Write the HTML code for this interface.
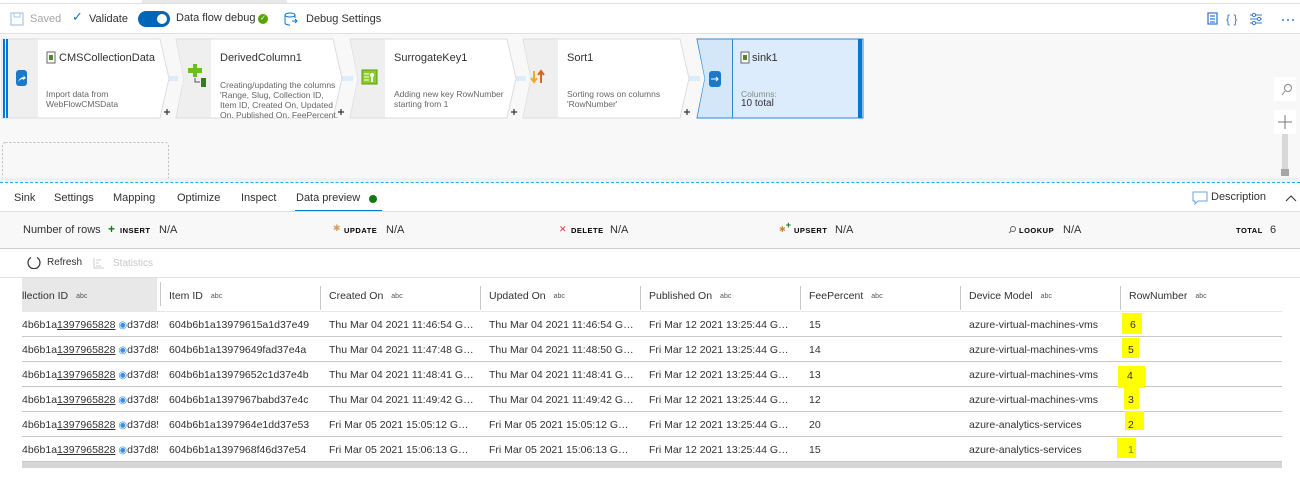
<!DOCTYPE html>
<html><head><meta charset="utf-8"><style>
*{margin:0;padding:0;box-sizing:border-box}
body{width:1300px;height:487px;overflow:hidden;background:#fff;font-family:"Liberation Sans",sans-serif;color:#323130;position:relative}
.a{position:absolute;white-space:nowrap}
.f11{font-size:11px}
.f12{font-size:12px}
.abc{font-size:7px;color:#555;margin-left:8px;vertical-align:1px;font-style:normal}
.cap{font-size:7.5px;font-weight:bold;letter-spacing:.5px;color:#000}
.row{position:absolute;left:22px;width:1260px;height:25px;border-bottom:1px solid #c8c8c8}
.row span,.hd span{position:absolute;top:7px;font-size:10.5px;white-space:nowrap;overflow:hidden;text-overflow:ellipsis;width:145px}
.row span:first-child{width:136px;text-overflow:clip}
.hd span{top:12px;font-size:10.5px}
.vs{position:absolute;top:8px;width:1px;height:24px;background:#c8c8c8}
.yl{position:absolute;background:#ffff00;width:17px;height:20px}
.r b{font-weight:normal;font-size:10px}
</style></head><body>
<div class="a" style="left:142px;top:0;width:145px;height:3px;background:#e8e8e8"></div>
<div class="a" style="left:0;top:3px;width:1300px;height:1px;background:#e0e0e0"></div>
<svg class="a" style="left:10px;top:12px" width="14" height="14"><rect x="1" y="1" width="12" height="12" fill="none" stroke="#a9c6e8" stroke-width="1.2"/><rect x="4" y="1" width="6" height="4" fill="none" stroke="#a9c6e8"/></svg>
<div class="a f11" style="left:30px;top:13px;color:#a6a6a6">Saved</div>
<div class="a" style="left:72px;top:9px;color:#0078d4;font-size:13px">✓</div>
<div class="a f11" style="left:89px;top:13px">Validate</div>
<div class="a" style="left:138px;top:11px;width:32px;height:16px;border-radius:8px;background:#0067b8"></div>
<div class="a" style="left:157px;top:14px;width:10px;height:10px;border-radius:5px;background:#fff"></div>
<div class="a f11" style="left:176px;top:12px">Data flow debug</div>
<div class="a" style="left:258px;top:14px;width:10px;height:10px;border-radius:5px;background:#57a300;color:#fff;font-size:7px;text-align:center;line-height:10px">✓</div>
<svg class="a" style="left:284px;top:11px" width="14" height="16"><ellipse cx="6" cy="4" rx="5" ry="2" fill="none" stroke="#0078d4"/><path d="M1 4v8c0 1 2 2 5 2M11 4v3" fill="none" stroke="#0078d4"/><path d="M8 10h5m-2-2 2 2-2 2" fill="none" stroke="#0078d4"/></svg>
<div class="a f11" style="left:306px;top:13px">Debug Settings</div>
<svg class="a" style="left:1205px;top:11px" width="90" height="16"><path d="M3 2h9v11H3zM5 5h5M5 8h5M5 11h5" fill="none" stroke="#3a7bd5" stroke-width="1.3"/><text x="21" y="12" font-size="12" fill="#3a7bd5" font-family="Liberation Sans">{ }</text><path d="M45 4h12M45 8h12M45 12h12" stroke="#3a7bd5"/><circle cx="49" cy="4" r="1.6" fill="#fff" stroke="#3a7bd5"/><circle cx="54" cy="8" r="1.6" fill="#fff" stroke="#3a7bd5"/><circle cx="49" cy="12" r="1.6" fill="#fff" stroke="#3a7bd5"/><circle cx="78" cy="9" r="1" fill="#3a7bd5"/><circle cx="83" cy="9" r="1" fill="#3a7bd5"/><circle cx="88" cy="9" r="1" fill="#3a7bd5"/></svg>
<div class="a" style="left:0;top:33px;width:1300px;height:1px;background:#e0e0e0"></div>
<div class="a" style="left:0;top:34px;width:1300px;height:144px;background:#f8f8f8"></div>
<svg class="a" style="left:0;top:34px" width="1300" height="146">
<g transform="translate(0,-34)">
<g fill="#dcecfa"><rect x="168" y="76" width="10" height="5"/><rect x="341" y="76" width="12" height="5"/><rect x="515" y="76" width="11" height="5"/><rect x="688" y="76" width="12" height="5"/></g>
<path d="M2 39H160L169 78.5 160 118H2Z" fill="#fff" stroke="#ddd"/>
<rect x="8" y="39.5" width="30" height="78" fill="#efefef"/>
<rect x="3" y="39" width="2" height="79" fill="#0078d4"/><rect x="6" y="39" width="2" height="79" fill="#0078d4"/>
<path d="M176 39H333L342 78.5 333 118H176L184 78.5Z" fill="#fff" stroke="#ddd"/>
<path d="M176.5 39.5H211V117.5H176.5L184 78.5Z" fill="#efefef"/>
<path d="M350 39H507L516 78.5 507 118H350L358 78.5Z" fill="#fff" stroke="#ddd"/>
<path d="M350.5 39.5H385V117.5H350.5L358 78.5Z" fill="#efefef"/>
<path d="M523 39H680L689 78.5 680 118H523L531 78.5Z" fill="#fff" stroke="#ddd"/>
<path d="M523.5 39.5H558V117.5H523.5L531 78.5Z" fill="#efefef"/>
<path d="M697 39H863V118H697L705 78.5Z" fill="#dcecfc" stroke="#2b88d8"/>
<path d="M697.5 39.5H732V117.5H697.5L705 78.5Z" fill="#d4e7f8"/>
<rect x="732" y="39" width="1" height="79" fill="#2b88d8"/>
<rect x="858" y="39" width="4" height="79" fill="#0078d4"/>
<rect x="16" y="70" width="11" height="16" rx="3" fill="#1e78c8"/><path d="M18 82q2-5 6-5l-1-2 3 3-3 2 0-1q-3 0-5 3z" fill="#fff"/>
<rect x="188" y="68" width="14" height="5" fill="#6cbf1a"/><rect x="193" y="64" width="4" height="13" fill="#6cbf1a"/><path d="M195 78v4h5" stroke="#555" fill="none"/><rect x="201" y="78" width="5" height="9" fill="#3b7a1a"/>
<rect x="362" y="70" width="15" height="14" fill="#8ccc2a" stroke="#5a9a10"/><circle cx="372" cy="75" r="2" fill="#fff"/><rect x="371" y="76" width="2" height="6" fill="#fff"/><path d="M364 74h5M364 77h5M364 80h5" stroke="#fff"/>
<path d="M534 71v10m-3-3 3 4 3-4" stroke="#f5a623" stroke-width="2" fill="none"/><path d="M541 83v-11m-3 3 3-4 3 4" stroke="#d9661c" stroke-width="2" fill="none"/>
<rect x="709" y="71" width="12" height="16" rx="3" fill="#1e78c8"/><path d="M711 79h7m-2-2 2 2-2 2" stroke="#fff" fill="none"/>
<rect x="47" y="52" width="8" height="11" fill="#fff" stroke="#666"/><rect x="49" y="55" width="4" height="5" fill="#4a8a2a"/>
<rect x="741" y="52" width="8" height="11" fill="#fff" stroke="#666"/><rect x="743" y="55" width="4" height="5" fill="#4a8a2a"/>
<g stroke="#333" stroke-width="1.2"><path d="M164 112h6M167 109v6M338 112h6M341 109v6M511 112h6M514 109v6M684 112h6M687 109v6"/></g>
<rect x="2.5" y="142.5" width="166" height="40" rx="3" fill="none" stroke="#bbb" stroke-dasharray="2,2"/>
<rect x="1274" y="77" width="22" height="24" fill="#fff"/><circle cx="1288" cy="88" r="3.5" fill="none" stroke="#888"/><path d="M1285 91l-3 4" stroke="#888"/>
<rect x="1274" y="110" width="22" height="24" fill="#fff"/><path d="M1278 122h14M1285 115v14" stroke="#777"/>
<rect x="1282" y="134" width="6" height="36" fill="#d8d8d8"/><rect x="1281" y="169" width="8" height="7" fill="#a6a6a6"/>
<rect x="646" y="179" width="12" height="2" fill="#222"/>
</g></svg>
<div class="a" style="left:59px;top:52px;font-size:11px">CMSCollectionData</div>
<div class="a" style="left:46px;top:89px;font-size:8.5px;color:#666;line-height:10px">Import data from<br>WebFlowCMSData</div>
<div class="a" style="left:220px;top:52px;font-size:11px">DerivedColumn1</div>
<div class="a" style="left:220px;top:80px;font-size:8.5px;color:#666;line-height:10px;height:38px;overflow:hidden">Creating/updating the columns<br>'Range, Slug, Collection ID,<br>Item ID, Created On, Updated<br>On, Published On, FeePercent,</div>
<div class="a" style="left:394px;top:52px;font-size:11px">SurrogateKey1</div>
<div class="a" style="left:394px;top:89px;font-size:8.5px;color:#666;line-height:10px">Adding new key RowNumber<br>starting from 1</div>
<div class="a" style="left:567px;top:52px;font-size:11px">Sort1</div>
<div class="a" style="left:567px;top:89px;font-size:8.5px;color:#666;line-height:10px">Sorting rows on columns<br>'RowNumber'</div>
<div class="a" style="left:752px;top:52px;font-size:11px">sink1</div>
<div class="a" style="left:741px;top:89px;font-size:8.5px;color:#888">Columns:</div>
<div class="a" style="left:741px;top:98px;font-size:10px">10 total</div>
<div class="a" style="left:0;top:178px;width:1300px;height:4px;background:#f0f0f0"></div>
<div class="a" style="left:0;top:182px;width:1300px;border-top:1px dashed #1ab0e8"></div>
<div class="a f11" style="left:14px;top:192px">Sink</div>
<div class="a f11" style="left:54px;top:192px">Settings</div>
<div class="a f11" style="left:113px;top:192px">Mapping</div>
<div class="a f11" style="left:177px;top:192px">Optimize</div>
<div class="a f11" style="left:241px;top:192px">Inspect</div>
<div class="a f11" style="left:296px;top:192px">Data preview</div>
<div class="a" style="left:369px;top:195px;width:8px;height:8px;border-radius:4px;background:#107c10"></div>
<div class="a" style="left:295px;top:210px;width:87px;height:2px;background:#0078d4"></div>
<svg class="a" style="left:1192px;top:191px" width="16" height="14"><path d="M1 1h14v9H6l-3 3v-3H1z" fill="none" stroke="#6ba3e0"/></svg>
<div class="a f11" style="left:1211px;top:191px">Description</div>
<svg class="a" style="left:1285px;top:195px" width="12" height="8"><path d="M1 6 6 1l5 5" fill="none" stroke="#333"/></svg>
<div class="a" style="left:0;top:211px;width:1300px;height:38px;background:#f8f8f8;border-top:1px solid #ddd;border-bottom:1px solid #ccc"></div>
<div class="a f11" style="left:23px;top:224px">Number of rows</div>
<div class="a" style="left:108px;top:222px;color:#107c10;font-size:12px;font-weight:bold">+</div>
<div class="a cap" style="left:120px;top:226px">INSERT</div>
<div class="a f11" style="left:159px;top:224px">N/A</div>
<div class="a" style="left:333px;top:223px;color:#d2a060;font-size:9px">✱</div>
<div class="a cap" style="left:344px;top:226px">UPDATE</div>
<div class="a f11" style="left:386px;top:224px">N/A</div>
<div class="a" style="left:559px;top:224px;color:#d13438;font-size:9px">✕</div>
<div class="a cap" style="left:571px;top:226px">DELETE</div>
<div class="a f11" style="left:610px;top:224px">N/A</div>
<div class="a" style="left:779px;top:224px;color:#c8883a;font-size:8px">✱<span style="color:#107c10;font-weight:bold;font-size:9px;position:relative;top:-4px">+</span></div>
<div class="a cap" style="left:794px;top:226px">UPSERT</div>
<div class="a f11" style="left:835px;top:224px">N/A</div>
<svg class="a" style="left:1008px;top:225px" width="9" height="9"><circle cx="5" cy="4" r="2.5" fill="none" stroke="#666"/><path d="M3 6 1 8" stroke="#666"/></svg>
<div class="a cap" style="left:1019px;top:226px">LOOKUP</div>
<div class="a f11" style="left:1063px;top:224px">N/A</div>
<div class="a cap" style="left:1236px;top:226px">TOTAL</div>
<div class="a f11" style="left:1270px;top:224px">6</div>
<svg class="a" style="left:27px;top:255px" width="14" height="14"><path d="M10 2.5A6 6 0 1 1 4 2.5" fill="none" stroke="#333" stroke-width="1.2"/></svg>
<div class="a" style="left:47px;top:257px;font-size:10px">Refresh</div>
<svg class="a" style="left:93px;top:257px" width="12" height="12"><path d="M1 1v10h10M3 3h5M3 6h3M3 9h5" stroke="#ccc" fill="none"/></svg>
<div class="a" style="left:113px;top:258px;font-size:10px;color:#c8c8c8">Statistics</div>
<div class="a" style="left:0;top:277px;width:1300px;height:1px;background:#e0e0e0"></div>
<div class="hd a" style="left:22px;top:278px;width:1260px;height:34px;border-bottom:1px solid #e6e6e6">
<div style="position:absolute;left:0;top:0;width:135px;height:34px;background:#e8e8e8"></div>
<span style="left:0">llection ID<i class="abc">abc</i></span>
<span style="left:147px">Item ID<i class="abc">abc</i></span>
<span style="left:307px">Created On<i class="abc">abc</i></span>
<span style="left:467px">Updated On<i class="abc">abc</i></span>
<span style="left:627px">Published On<i class="abc">abc</i></span>
<span style="left:787px">FeePercent<i class="abc">abc</i></span>
<span style="left:947px">Device Model<i class="abc">abc</i></span>
<span style="left:1107px">RowNumber<i class="abc">abc</i></span>
<div class="vs" style="left:138px;top:4px"></div><div class="vs" style="left:298px"></div><div class="vs" style="left:458px"></div><div class="vs" style="left:618px"></div><div class="vs" style="left:778px"></div><div class="vs" style="left:938px"></div><div class="vs" style="left:1098px"></div>
</div>
<div class="row r" style="top:312px"><span style="left:0">4b6b1a<u>1397965828</u> <b style="color:#3a8ee6">◉</b>d37d85</span><span style="left:147px">604b6b1a13979615a1d37e49</span><span style="left:307px">Thu Mar 04 2021 11:46:54 GMT+0000</span><span style="left:467px">Thu Mar 04 2021 11:46:54 GMT+0000</span><span style="left:627px">Fri Mar 12 2021 13:25:44 GMT+0000</span><span style="left:787px">15</span><span style="left:947px">azure-virtual-machines-vms</span></div>
<div class="row r" style="top:337px"><span style="left:0">4b6b1a<u>1397965828</u> <b style="color:#3a8ee6">◉</b>d37d85</span><span style="left:147px">604b6b1a13979649fad37e4a</span><span style="left:307px">Thu Mar 04 2021 11:47:48 GMT+0000</span><span style="left:467px">Thu Mar 04 2021 11:48:50 GMT+0000</span><span style="left:627px">Fri Mar 12 2021 13:25:44 GMT+0000</span><span style="left:787px">14</span><span style="left:947px">azure-virtual-machines-vms</span></div>
<div class="row r" style="top:362px"><span style="left:0">4b6b1a<u>1397965828</u> <b style="color:#3a8ee6">◉</b>d37d85</span><span style="left:147px">604b6b1a13979652c1d37e4b</span><span style="left:307px">Thu Mar 04 2021 11:48:41 GMT+0000</span><span style="left:467px">Thu Mar 04 2021 11:48:41 GMT+0000</span><span style="left:627px">Fri Mar 12 2021 13:25:44 GMT+0000</span><span style="left:787px">13</span><span style="left:947px">azure-virtual-machines-vms</span></div>
<div class="row r" style="top:387px"><span style="left:0">4b6b1a<u>1397965828</u> <b style="color:#3a8ee6">◉</b>d37d85</span><span style="left:147px">604b6b1a1397967babd37e4c</span><span style="left:307px">Thu Mar 04 2021 11:49:42 GMT+0000</span><span style="left:467px">Thu Mar 04 2021 11:49:42 GMT+0000</span><span style="left:627px">Fri Mar 12 2021 13:25:44 GMT+0000</span><span style="left:787px">12</span><span style="left:947px">azure-virtual-machines-vms</span></div>
<div class="row r" style="top:412px"><span style="left:0">4b6b1a<u>1397965828</u> <b style="color:#3a8ee6">◉</b>d37d85</span><span style="left:147px">604b6b1a1397964e1dd37e53</span><span style="left:307px">Fri Mar 05 2021 15:05:12 GMT+0000</span><span style="left:467px">Fri Mar 05 2021 15:05:12 GMT+0000</span><span style="left:627px">Fri Mar 12 2021 13:25:44 GMT+0000</span><span style="left:787px">20</span><span style="left:947px">azure-analytics-services</span></div>
<div class="row r" style="top:437px"><span style="left:0">4b6b1a<u>1397965828</u> <b style="color:#3a8ee6">◉</b>d37d85</span><span style="left:147px">604b6b1a1397968f46d37e54</span><span style="left:307px">Fri Mar 05 2021 15:06:13 GMT+0000</span><span style="left:467px">Fri Mar 05 2021 15:06:13 GMT+0000</span><span style="left:627px">Fri Mar 12 2021 13:25:44 GMT+0000</span><span style="left:787px">15</span><span style="left:947px">azure-analytics-services</span></div>
<div class="yl" style="left:1122px;top:313px;width:20px;height:21px"></div>
<div class="yl" style="left:1122px;top:338px;width:17px;height:20px"></div>
<div class="yl" style="left:1118px;top:366px;width:27px;height:22px"></div>
<div class="yl" style="left:1124px;top:388px;width:15px;height:21px"></div>
<div class="yl" style="left:1125px;top:411px;width:19px;height:19px"></div>
<div class="yl" style="left:1117px;top:438px;width:19px;height:20px"></div>
<div class="a" style="left:1130px;top:319px;font-size:10.5px">6</div>
<div class="a" style="left:1128px;top:344px;font-size:10.5px">5</div>
<div class="a" style="left:1127px;top:370px;font-size:10.5px">4</div>
<div class="a" style="left:1128px;top:394px;font-size:10.5px">3</div>
<div class="a" style="left:1128px;top:419px;font-size:10.5px">2</div>
<div class="a" style="left:1128px;top:444px;font-size:10.5px;color:#6a8a1a">1</div>
<div class="a" style="left:22px;top:462px;width:1260px;height:6px;background:#d6d6d6"></div>
</body></html>
